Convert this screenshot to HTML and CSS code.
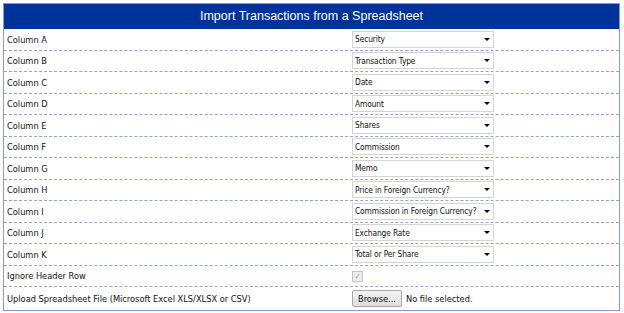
FILE: index.html
```html
<!DOCTYPE html>
<html>
<head>
  <link rel="stylesheet" href="styles.css">
</head>
<body>
  <form class="import-form">
    <div class="form-title">Import Transactions from a Spreadsheet</div>
    <div class="form-row">
      <div class="form-label">Column A</div>
      <div class="form-field"><div class="select"><span>Security</span><i class="caret"></i></div></div>
    </div>
    <div class="form-row">
      <div class="form-label">Column B</div>
      <div class="form-field"><div class="select"><span>Transaction Type</span><i class="caret"></i></div></div>
    </div>
    <div class="form-row">
      <div class="form-label">Column C</div>
      <div class="form-field"><div class="select"><span>Date</span><i class="caret"></i></div></div>
    </div>
    <div class="form-row">
      <div class="form-label">Column D</div>
      <div class="form-field"><div class="select"><span>Amount</span><i class="caret"></i></div></div>
    </div>
    <div class="form-row">
      <div class="form-label">Column E</div>
      <div class="form-field"><div class="select"><span>Shares</span><i class="caret"></i></div></div>
    </div>
    <div class="form-row">
      <div class="form-label">Column F</div>
      <div class="form-field"><div class="select"><span>Commission</span><i class="caret"></i></div></div>
    </div>
    <div class="form-row">
      <div class="form-label">Column G</div>
      <div class="form-field"><div class="select"><span>Memo</span><i class="caret"></i></div></div>
    </div>
    <div class="form-row">
      <div class="form-label">Column H</div>
      <div class="form-field"><div class="select"><span>Price in Foreign Currency?</span><i class="caret"></i></div></div>
    </div>
    <div class="form-row">
      <div class="form-label">Column I</div>
      <div class="form-field"><div class="select"><span>Commission in Foreign Currency?</span><i class="caret"></i></div></div>
    </div>
    <div class="form-row">
      <div class="form-label">Column J</div>
      <div class="form-field"><div class="select"><span>Exchange Rate</span><i class="caret"></i></div></div>
    </div>
    <div class="form-row">
      <div class="form-label">Column K</div>
      <div class="form-field"><div class="select"><span>Total or Per Share</span><i class="caret"></i></div></div>
    </div>
    <div class="form-row">
      <div class="form-label">Ignore Header Row</div>
      <div class="form-field"><span class="check-box">&#10003;</span></div>
    </div>
    <div class="form-row last">
      <div class="form-label">Upload Spreadsheet File (Microsoft Excel XLS/XLSX or CSV)</div>
      <div class="form-field"><button type="button" class="browse">Browse...</button><span class="file-name">No file selected.</span></div>
    </div>
  </form>
</body>
</html>
```
FILE: styles.css
```css
body {
  margin: 0;
  background: #fff;
}

.import-form {
  margin: 3px 4px 0 3px;
  border: 1px solid #7f9cd4;
  font-family: "DejaVu Sans Condensed", "DejaVu Sans", sans-serif;
  font-size: 9.2px;
  color: #111;
}

.form-title {
  background: #003399;
  color: #fff;
  font-family: "Liberation Sans", Arial, sans-serif;
  font-size: 12.5px;
  text-align: center;
  height: 25px;
  line-height: 25px;
}

.form-row {
  display: grid;
  grid-template-columns: 348px 1fr;
  align-items: center;
  height: 21.5px;
  box-sizing: border-box;
  border-bottom: 1px dashed #8ea6d8;
}

.form-row.last {
  border-bottom: none;
  height: 23px;
}

.form-label {
  padding-left: 3px;
}

.select {
  display: flex;
  align-items: center;
  justify-content: space-between;
  width: 142px;
  height: 17px;
  box-sizing: border-box;
  border: 1px solid #d4d4d4;
  background: #fff;
  padding: 0 3px 0 2px;
  font-size: 8.3px;
  letter-spacing: -0.1px;
  white-space: nowrap;
}

.caret {
  flex-shrink: 0;
  border-left: 3px solid transparent;
  border-right: 3px solid transparent;
  border-top: 3px solid #000;
  margin-left: 2px;
}

.check-box {
  display: inline-block;
  width: 9px;
  height: 9px;
  border: 1px solid #c4c4c4;
  background: #ececec;
  color: #8a9ab8;
  font-size: 8px;
  line-height: 9px;
  text-align: center;
}

.browse {
  font-family: inherit;
  font-size: 9.2px;
  height: 17px;
  padding: 0 5px;
  border: 1px solid #a8a8a8;
  border-radius: 2px;
  background: linear-gradient(#f4f4f4, #dcdcdc);
  color: #111;
  margin: 0;
}

.file-name {
  margin-left: 4px;
}
```
